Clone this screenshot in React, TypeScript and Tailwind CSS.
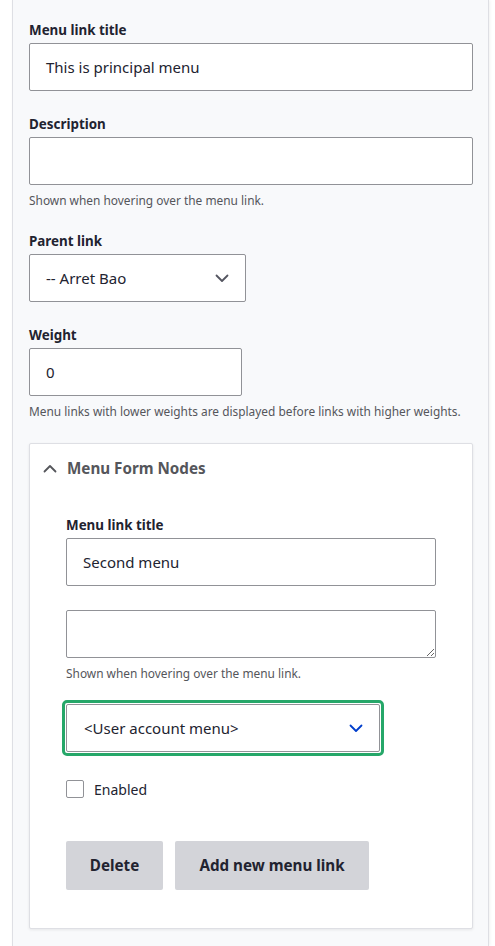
import React from 'react';

const Chevron: React.FC<{ up?: boolean; className?: string }> = ({ up, className }) => (
  <svg width="14" height="9" viewBox="0 0 14 9" className={className} fill="none">
    <path
      d={up ? 'M1.5 7.5 L7 2 L12.5 7.5' : 'M1.5 1.5 L7 7 L12.5 1.5'}
      stroke="currentColor"
      strokeWidth="1.8"
      strokeLinecap="round"
      strokeLinejoin="round"
    />
  </svg>
);

const Label: React.FC<{ children: React.ReactNode }> = ({ children }) => (
  <div className="text-[13.4px] font-bold leading-[18px] text-[#222330] mb-[4px]">{children}</div>
);

const Help: React.FC<{ children: React.ReactNode }> = ({ children }) => (
  <div className="mt-[7px] text-[11.9px] leading-[16px] text-[#55565b]">{children}</div>
);

const TextBox: React.FC<{ value?: string; width: string }> = ({ value, width }) => (
  <div
    className={`${width} h-[48px] flex items-center px-[16px] bg-white border border-[#919297] rounded-[2px] text-[15px] text-[#222330]`}
  >
    {value}
  </div>
);

export default function App() {
  return (
    <div
      className="min-h-screen bg-white"
      style={{ fontFamily: '"Noto Sans", "Open Sans", Arial, sans-serif' }}
    >
      <div className="ml-[12px] w-[477px] min-h-[946px] bg-[#f8f9fb] border-x border-[#dedfe4] shadow-[1px_0_3px_rgba(0,0,0,0.06)] pl-[16px] pr-[15px] pt-[21px]">
        {/* Menu link title */}
        <Label>Menu link title</Label>
        <TextBox value="This is principal menu" width="w-[444px]" />

        {/* Description */}
        <div className="mt-[24px]">
          <Label>Description</Label>
          <TextBox width="w-[444px]" />
          <Help>Shown when hovering over the menu link.</Help>
        </div>

        {/* Parent link */}
        <div className="mt-[24px]">
          <Label>Parent link</Label>
          <div className="w-[217px] h-[48px] flex items-center justify-between pl-[16px] pr-[16px] bg-white border border-[#919297] rounded-[2px] text-[15px] text-[#222330]">
            <span>-- Arret Bao</span>
            <Chevron className="text-[#545560]" />
          </div>
        </div>

        {/* Weight */}
        <div className="mt-[24px]">
          <Label>Weight</Label>
          <TextBox value="0" width="w-[213px]" />
          <Help>Menu links with lower weights are displayed before links with higher weights.</Help>
        </div>

        {/* Menu Form Nodes */}
        <div className="mt-[24px] w-[444px] bg-white border border-[#dedfe4] rounded-[2px] shadow-[0_1px_3px_rgba(0,0,0,0.08)]">
          <div className="h-[49px] flex items-center pl-[13px] gap-[10px] text-[15.2px] font-bold text-[#55565b]">
            <Chevron up className="text-[#55565b]" />
            <span>Menu Form Nodes</span>
          </div>

          <div className="pl-[36px] pt-[23px] pb-[38px]">
            <Label>Menu link title</Label>
            <TextBox value="Second menu" width="w-[370px]" />

            <div className="mt-[24px]">
              <textarea className="block w-[370px] h-[48px] bg-white border border-[#919297] rounded-[2px]" />
              <Help>Shown when hovering over the menu link.</Help>
            </div>

            <div className="mt-[19px] -ml-[4px] w-[322px] p-[1px] border-[3px] border-[#26a769] rounded-[5px]">
              <div className="h-[48px] flex items-center justify-between pl-[17px] pr-[16px] bg-white border border-[#919297] rounded-[2px] text-[15px] text-[#222330]">
                <span>&lt;User account menu&gt;</span>
                <Chevron className="text-[#003ecc]" />
              </div>
            </div>

            <label className="mt-[24px] h-[18px] flex items-center gap-[10px] text-[14px] text-[#222330]">
              <span className="w-[18px] h-[18px] border border-[#919297] rounded-[2px] bg-white" />
              <span>Enabled</span>
            </label>

            <div className="mt-[43px] flex gap-[12px]">
              <button className="w-[97px] h-[49px] bg-[#d3d4d9] rounded-[2px] text-[15.2px] font-bold text-[#222330]">
                Delete
              </button>
              <button className="w-[194px] h-[49px] bg-[#d3d4d9] rounded-[2px] text-[15.2px] font-bold text-[#222330]">
                Add new menu link
              </button>
            </div>
          </div>
        </div>
      </div>
    </div>
  );
}
